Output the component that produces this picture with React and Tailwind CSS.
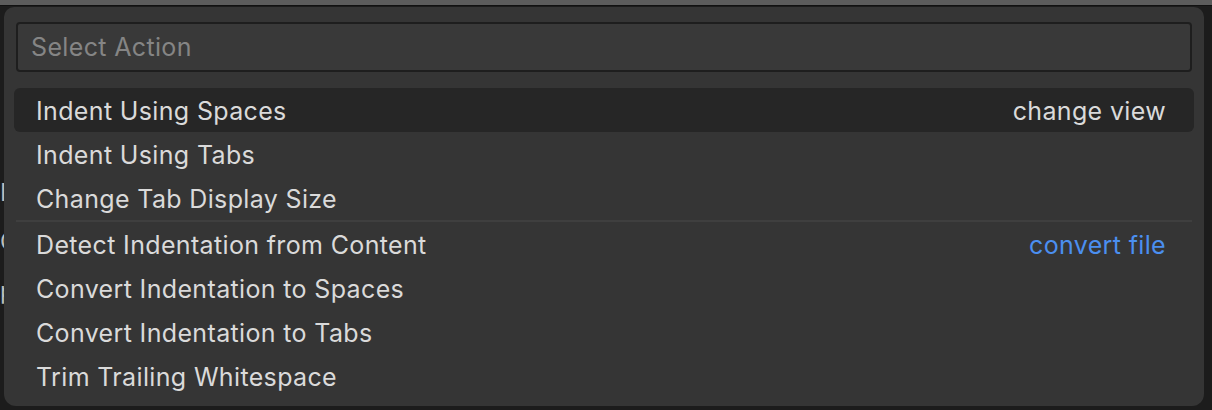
import React, { useState } from 'react';

const groups = [
  [
    { label: 'Indent Using Spaces', hint: 'change view' },
    { label: 'Indent Using Tabs' },
    { label: 'Change Tab Display Size' },
  ],
  [
    { label: 'Detect Indentation from Content', hint: 'convert file', accent: true },
    { label: 'Convert Indentation to Spaces' },
    { label: 'Convert Indentation to Tabs' },
    { label: 'Trim Trailing Whitespace' },
  ],
];

const ActionRow = ({ item, active }) => (
  <div
    className={`flex items-center justify-between h-[44px] pt-[3px] pl-[22px] pr-[28px] rounded-[6px] ${
      active ? 'bg-[#262626]' : ''
    }`}
  >
    <span className="text-[#dadada]">{item.label}</span>
    {item.hint && (
      <span className={item.accent ? 'text-[#4b8ff0]' : 'text-[#dadada]'}>{item.hint}</span>
    )}
  </div>
);

const App = () => {
  const [query, setQuery] = useState('');

  return (
    <div
      className="relative w-[1212px] h-[410px] overflow-hidden bg-[#1c1c1c]"
      style={{ fontFamily: 'Inter, "Noto Sans", sans-serif' }}
    >
      {/* top bar of the window behind */}
      <div className="h-[6px] bg-[#5c5c5c] border-b border-[#111]" />

      {/* editor text sitting behind the popup */}
      <div className="absolute left-0 top-[168px] flex flex-col text-[24px] leading-[49px] text-[#bdbdbd]">
        <span>N</span>
        <span>C</span>
        <span>p</span>
      </div>

      {/* command palette */}
      <div className="absolute left-[4px] top-[7px] w-[1200px] h-[399px] bg-[#353535] rounded-b-[12px] rounded-t-[10px] px-[10px] pt-[15px] text-[25px] tracking-[0.35px]">
        <div className="mx-[2px] h-[50px] flex items-center bg-[#393939] border-2 border-[#1e1e1e] rounded-[4px] px-[13px] pt-[2px]">
          <input
            value={query}
            onChange={(e) => setQuery(e.target.value)}
            placeholder="Select Action"
            className="w-full bg-transparent outline-none text-[25px] tracking-[0.35px] text-[#dadada] placeholder:text-[#858585]"
          />
        </div>

        <div className="mt-[16px]">
          {groups.map((group, gi) => (
            <div key={gi}>
              {gi > 0 && <div className="mx-[2px] h-[2px] bg-[#3f3f3f]" />}
              {group.map((item, i) => (
                <ActionRow key={item.label} item={item} active={gi === 0 && i === 0} />
              ))}
            </div>
          ))}
        </div>
      </div>
    </div>
  );
};

export default App;
